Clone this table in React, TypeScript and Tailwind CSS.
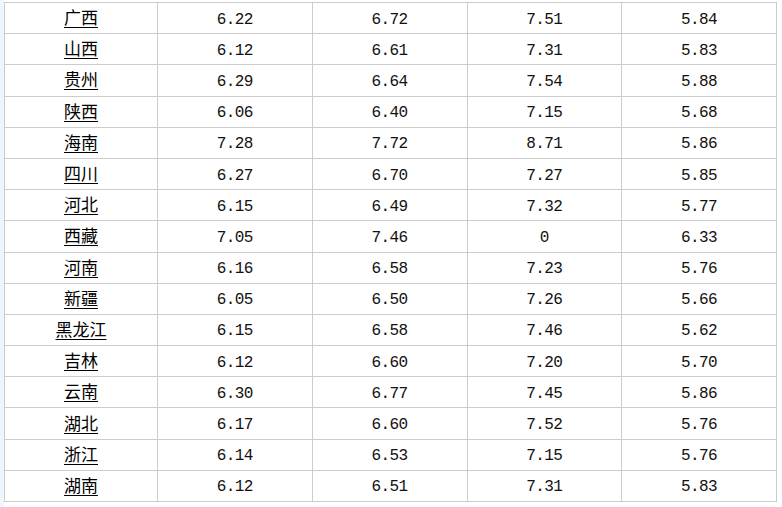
import React from "react";

const rows: [string, string, string, string, string][] = [
  ["广西", "6.22", "6.72", "7.51", "5.84"],
  ["山西", "6.12", "6.61", "7.31", "5.83"],
  ["贵州", "6.29", "6.64", "7.54", "5.88"],
  ["陕西", "6.06", "6.40", "7.15", "5.68"],
  ["海南", "7.28", "7.72", "8.71", "5.86"],
  ["四川", "6.27", "6.70", "7.27", "5.85"],
  ["河北", "6.15", "6.49", "7.32", "5.77"],
  ["西藏", "7.05", "7.46", "0", "6.33"],
  ["河南", "6.16", "6.58", "7.23", "5.76"],
  ["新疆", "6.05", "6.50", "7.26", "5.66"],
  ["黑龙江", "6.15", "6.58", "7.46", "5.62"],
  ["吉林", "6.12", "6.60", "7.20", "5.70"],
  ["云南", "6.30", "6.77", "7.45", "5.86"],
  ["湖北", "6.17", "6.60", "7.52", "5.76"],
  ["浙江", "6.14", "6.53", "7.15", "5.76"],
  ["湖南", "6.12", "6.51", "7.31", "5.83"],
];

export default function App() {
  return (
    <div className="flex h-[507px] w-[782px] bg-white overflow-hidden">
      <div className="w-[4px] h-full bg-[#eef6fb] shrink-0" />
      <div className="pt-[2px]">
        <table className="border-collapse table-fixed w-[773px] text-black">
          <tbody>
            {rows.map((r) => (
              <tr key={r[0]} className="h-[31.2px]">
                <td className="border border-[#cccccc] p-0 text-center w-[153px]">
                  <span className="underline underline-offset-[3px] text-[17px] leading-none [font-family:'Noto_Sans_CJK_SC',sans-serif]">
                    {r[0]}
                  </span>
                </td>
                {r.slice(1).map((v, i) => (
                  <td
                    key={i}
                    className="border border-[#cccccc] p-0 pt-[3px] text-center text-[16px] tracking-[-0.6px] leading-none text-[#111] [font-family:'Liberation_Mono',monospace]"
                  >
                    {v}
                  </td>
                ))}
              </tr>
            ))}
          </tbody>
        </table>
      </div>
    </div>
  );
}
